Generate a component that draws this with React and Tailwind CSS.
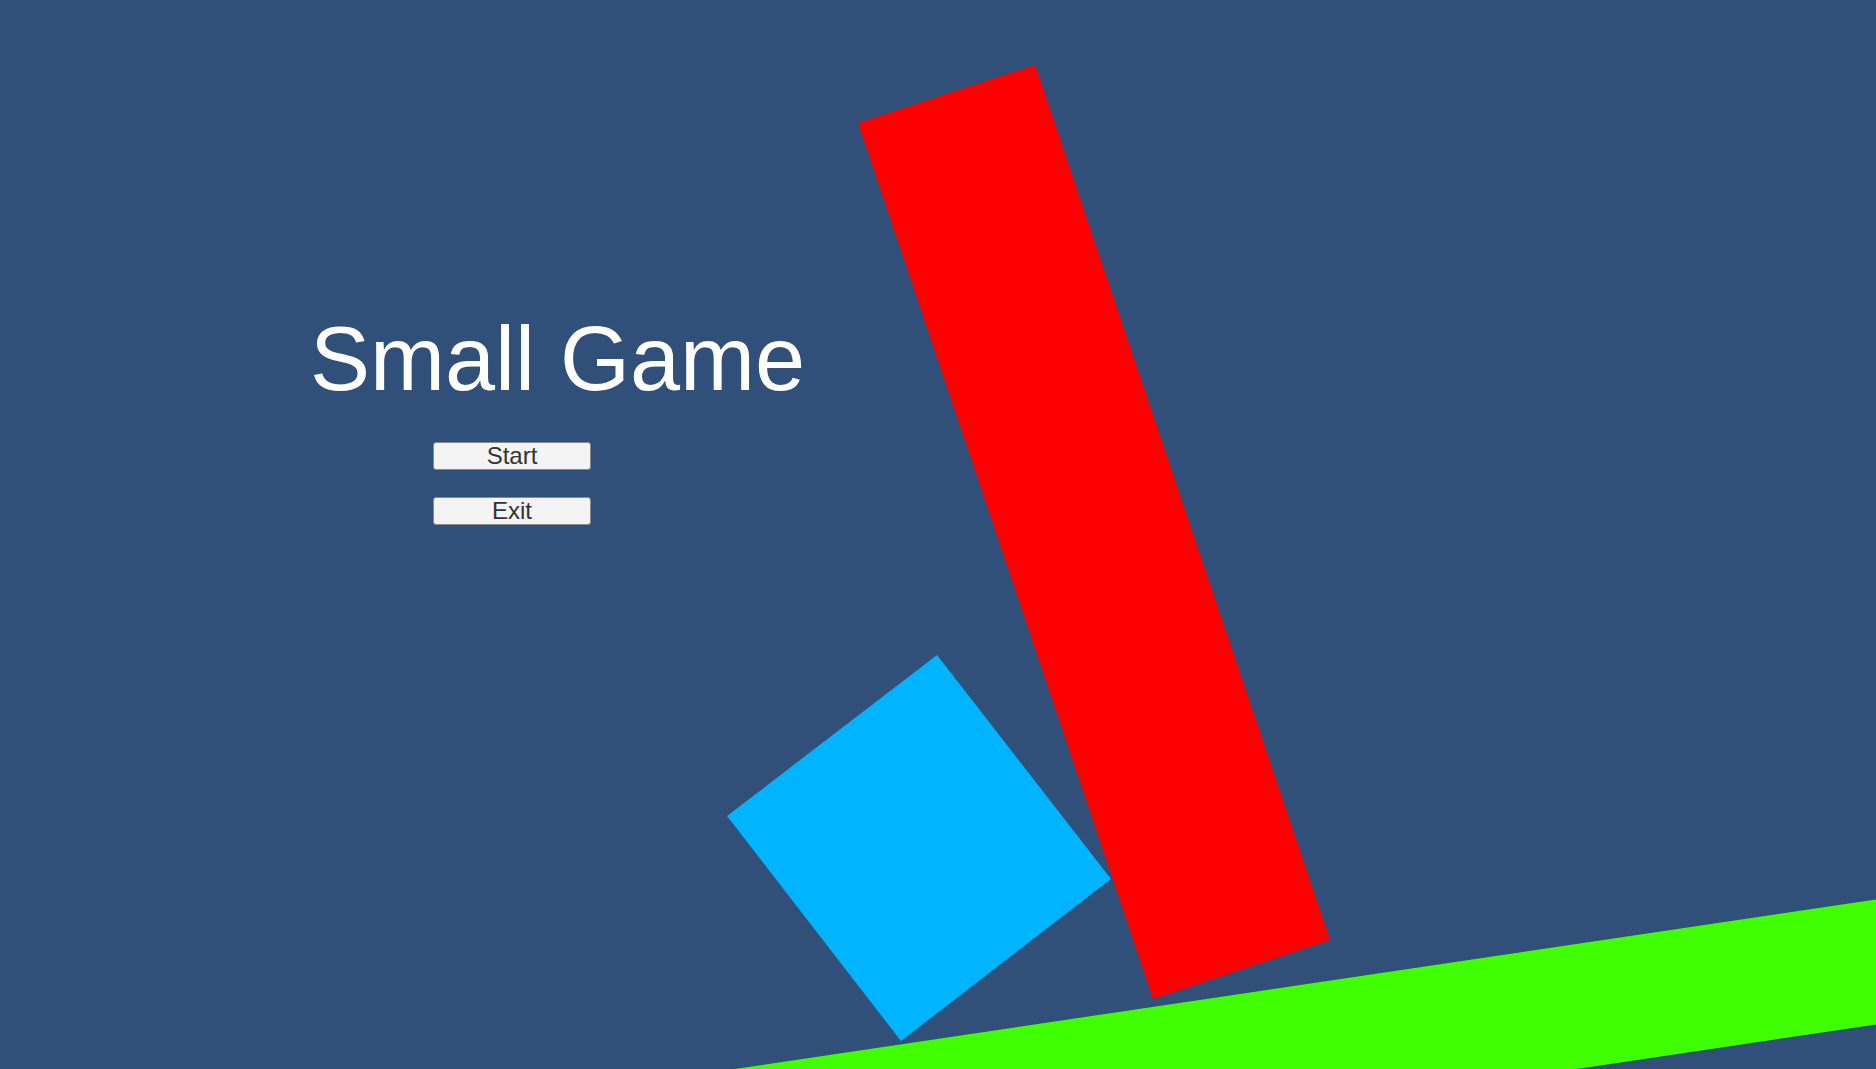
// Title screen: menu on the left, physics props scattered over the scene
const props = [
  { id: 'plank', fill: '#ff0000', points: '858,123 1035,65 1330,940 1153,999' },
  { id: 'crate', fill: '#00b4ff', points: '727,816 937,655 1111,879 901,1041' },
  { id: 'ground', fill: '#40ff00', points: '600,1089 1900,896 1900,1021 600,1214' },
];

function MenuButton({ children }) {
  return (
    <button className="w-[158px] h-[28px] flex items-center justify-center rounded-[3px] border border-[#8a8a8a] bg-[#f4f4f4] text-[#333333] text-[24px] leading-none font-['Liberation_Sans',Arial,sans-serif]">
      {children}
    </button>
  );
}

export default function App() {
  return (
    <main className="relative w-full h-[1069px] overflow-hidden bg-[#315079]">
      {/* scene */}
      <svg className="absolute inset-0" width="1876" height="1069" viewBox="0 0 1876 1069">
        {props.map((p) => (
          <polygon key={p.id} points={p.points} fill={p.fill} />
        ))}
      </svg>

      <div className="relative flex flex-col items-start pt-[314px] pl-[310px]">
        <h1 className="text-white text-[90px] leading-none font-['Liberation_Sans',Arial,sans-serif]">
          Small Game
        </h1>
        <div className="flex flex-col gap-[27px] mt-[38px] ml-[123px]">
          <MenuButton>Start</MenuButton>
          <MenuButton>Exit</MenuButton>
        </div>
      </div>
    </main>
  );
}
